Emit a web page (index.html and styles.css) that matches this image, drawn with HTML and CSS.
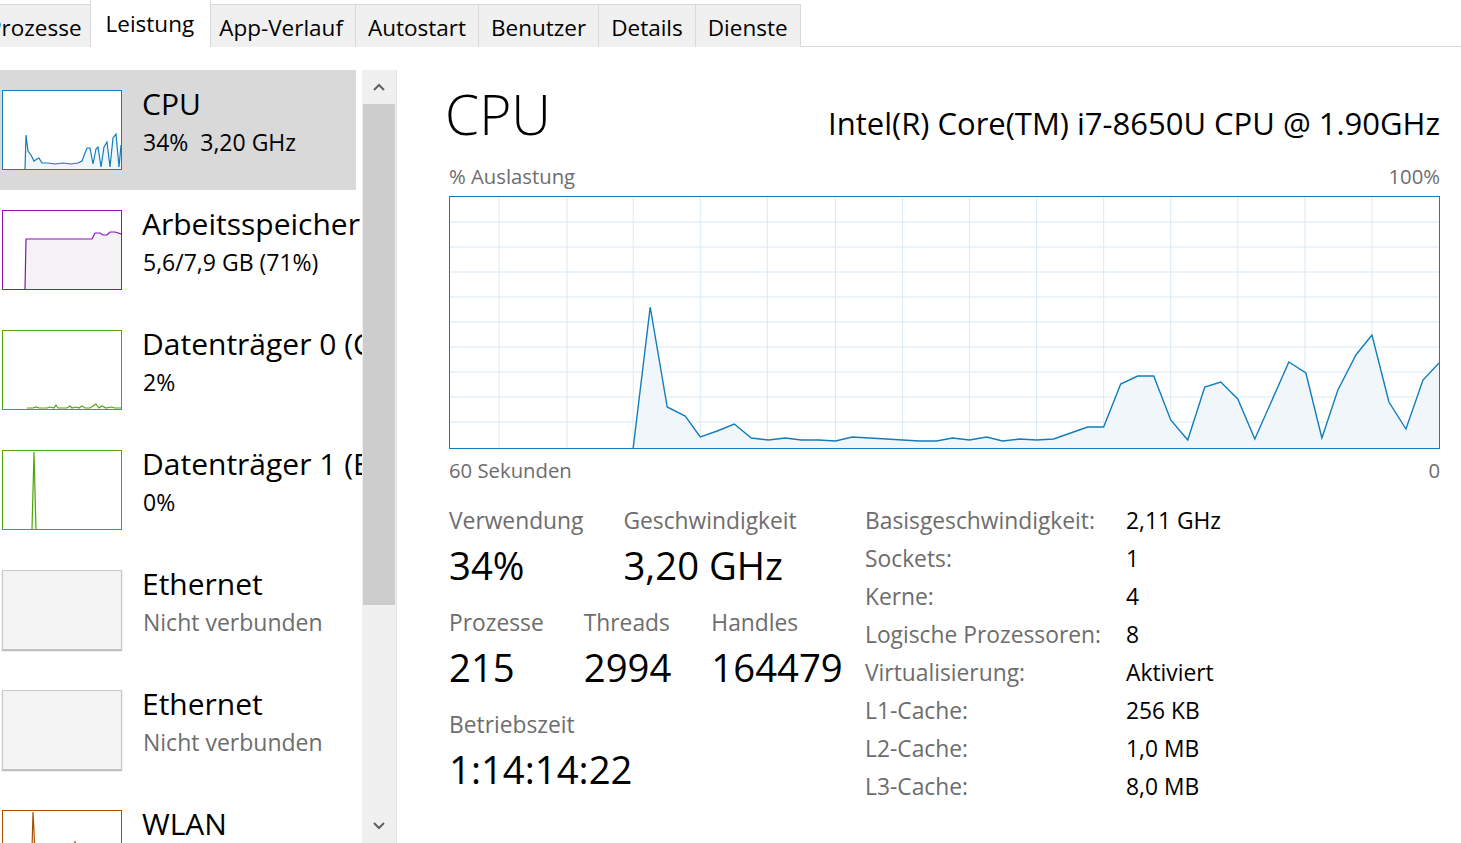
FILE: index.html
```html
<!DOCTYPE html>
<html lang="de">
<head>
<meta charset="utf-8">
<title>Task-Manager – Leistung</title>
<link rel="stylesheet" href="styles.css">
</head>
<body>
<div class="tabs">
  <div class="tab first">Prozesse</div>
  <div class="tab active">Leistung</div>
  <div class="tab">App-Verlauf</div>
  <div class="tab">Autostart</div>
  <div class="tab">Benutzer</div>
  <div class="tab">Details</div>
  <div class="tab">Dienste</div>
</div>
<div class="main">
  <aside class="side">
    <div class="list">
      <div class="item selected">
        <div class="thumb t-cpu">
          <svg viewBox="0 0 118 78" preserveAspectRatio="none"><polygon class="f-cpu" points="22,78 23,44 25,60 28,64 31,70 34,68 36,67 39,72 45,72 52,73 60,72 68,73 75,72 79,70 82,62 84,57 87,57 90,73 93,58 95,56 98,76 101,56 104,51 107,76 110,47 113,43 116,76 118,54 118,78"/><polyline class="l-cpu" points="22,78 23,44 25,60 28,64 31,70 34,68 36,67 39,72 45,72 52,73 60,72 68,73 75,72 79,70 82,62 84,57 87,57 90,73 93,58 95,56 98,76 101,56 104,51 107,76 110,47 113,43 116,76 118,54"/></svg>
        </div>
        <div class="info"><div class="name">CPU</div><div class="sub">34%&nbsp; 3,20 GHz</div></div>
      </div>
      <div class="item">
        <div class="thumb t-mem">
          <svg viewBox="0 0 118 78" preserveAspectRatio="none"><polygon class="f-mem" points="22,78 23,28 89,28 92,22 97,22 100,24 104,24 107,21 112,21 118,23 118,78"/><polyline class="l-mem" points="22,78 23,28 89,28 92,22 97,22 100,24 104,24 107,21 112,21 118,23"/></svg>
        </div>
        <div class="info"><div class="name">Arbeitsspeicher</div><div class="sub">5,6/7,9 GB (71%)</div></div>
      </div>
      <div class="item">
        <div class="thumb t-disk">
          <svg viewBox="0 0 118 78" preserveAspectRatio="none"><polyline class="l-disk" points="24,77 30,77 33,76 36,77 44,77 47,76 51,77 53,74 55,77 64,77 67,75 69,77 73,76 76,77 79,75 82,77 87,77 90,75 93,73 96,77 99,75 103,77 108,76 112,77 118,77"/></svg>
        </div>
        <div class="info"><div class="name">Datenträger 0 (C:)</div><div class="sub">2%</div></div>
      </div>
      <div class="item">
        <div class="thumb t-disk">
          <svg viewBox="0 0 118 78" preserveAspectRatio="none"><polygon class="f-disk" points="29,78 31,1 33,78"/><polyline class="l-disk" points="29,78 31,1 33,78"/></svg>
        </div>
        <div class="info"><div class="name">Datenträger 1 (E:)</div><div class="sub">0%</div></div>
      </div>
      <div class="item">
        <div class="thumb t-eth"></div>
        <div class="info"><div class="name">Ethernet</div><div class="sub grey">Nicht verbunden</div></div>
      </div>
      <div class="item">
        <div class="thumb t-eth"></div>
        <div class="info"><div class="name">Ethernet</div><div class="sub grey">Nicht verbunden</div></div>
      </div>
      <div class="item">
        <div class="thumb t-wlan">
          <svg viewBox="0 0 118 78" preserveAspectRatio="none"><polyline class="l-wlan" points="28,78 30,1 31,20 33,78 70,78 72,30 73,40 75,78 118,78"/></svg>
        </div>
        <div class="info"><div class="name">WLAN</div><div class="sub">S: 0 E: 0 KBit/s</div></div>
      </div>
    </div>
    <div class="scrollbar">
      <div class="sb-btn"><svg viewBox="0 0 12 8"><polyline points="1,7 6,2 11,7"/></svg></div>
      <div class="sb-thumb"></div>
      <div class="sb-track"></div>
      <div class="sb-btn"><svg viewBox="0 0 12 8"><polyline points="1,1 6,6 11,1"/></svg></div>
    </div>
  </aside>

  <section class="detail">
    <div class="head">
      <div class="big-title">CPU</div>
      <div class="proc">Intel(R) Core(TM) i7-8650U CPU @ 1.90GHz</div>
    </div>
    <div class="axis top"><span>% Auslastung</span><span>100%</span></div>
    <div class="graph">
      <svg viewBox="0 0 988 251" preserveAspectRatio="none">
        <g class="grid">
          <line x1="0" y1="25" x2="988" y2="25"/><line x1="0" y1="50" x2="988" y2="50"/>
          <line x1="0" y1="75" x2="988" y2="75"/><line x1="0" y1="100" x2="988" y2="100"/>
          <line x1="0" y1="125" x2="988" y2="125"/><line x1="0" y1="150" x2="988" y2="150"/>
          <line x1="0" y1="175" x2="988" y2="175"/><line x1="0" y1="200" x2="988" y2="200"/>
          <line x1="0" y1="225" x2="988" y2="225"/>
          <line x1="49" y1="0" x2="49" y2="251"/><line x1="117" y1="0" x2="117" y2="251"/>
          <line x1="183" y1="0" x2="183" y2="251"/><line x1="250" y1="0" x2="250" y2="251"/>
          <line x1="317" y1="0" x2="317" y2="251"/><line x1="385" y1="0" x2="385" y2="251"/>
          <line x1="452" y1="0" x2="452" y2="251"/><line x1="519" y1="0" x2="519" y2="251"/>
          <line x1="586" y1="0" x2="586" y2="251"/><line x1="653" y1="0" x2="653" y2="251"/>
          <line x1="720" y1="0" x2="720" y2="251"/><line x1="787" y1="0" x2="787" y2="251"/>
          <line x1="854" y1="0" x2="854" y2="251"/><line x1="921" y1="0" x2="921" y2="251"/>
        </g>
        <polygon class="area" points="183,251 200,110 217,210 235,219 250,240 267,234 284,227 301,241 318,243 335,241 351,243 368,243 385,244 402,240 419,241 436,242 452,243 469,244 486,244 502,241 519,243 536,240 552,244 569,242 586,243 603,242 620,236 637,230 653,230 670,187 687,179 703,179 720,223 737,243 754,190 770,185 787,202 804,242 838,165 855,176 871,241 887,193 905,158 921,138 938,205 955,232 972,183 988,166 988,251"/>
        <polyline class="line" points="183,251 200,110 217,210 235,219 250,240 267,234 284,227 301,241 318,243 335,241 351,243 368,243 385,244 402,240 419,241 436,242 452,243 469,244 486,244 502,241 519,243 536,240 552,244 569,242 586,243 603,242 620,236 637,230 653,230 670,187 687,179 703,179 720,223 737,243 754,190 770,185 787,202 804,242 838,165 855,176 871,241 887,193 905,158 921,138 938,205 955,232 972,183 988,166"/>
      </svg>
    </div>
    <div class="axis bottom"><span>60 Sekunden</span><span>0</span></div>

    <div class="stats">
      <div class="stats-left">
        <div class="row">
          <div class="stat"><div class="lbl">Verwendung</div><div class="val">34%</div></div>
          <div class="stat"><div class="lbl">Geschwindigkeit</div><div class="val">3,20 GHz</div></div>
        </div>
        <div class="row">
          <div class="stat"><div class="lbl">Prozesse</div><div class="val">215</div></div>
          <div class="stat"><div class="lbl">Threads</div><div class="val">2994</div></div>
          <div class="stat"><div class="lbl">Handles</div><div class="val">164479</div></div>
        </div>
        <div class="row">
          <div class="stat"><div class="lbl">Betriebszeit</div><div class="val">1:14:14:22</div></div>
        </div>
      </div>
      <div class="props">
        <div class="k">Basisgeschwindigkeit:</div><div class="v">2,11 GHz</div>
        <div class="k">Sockets:</div><div class="v">1</div>
        <div class="k">Kerne:</div><div class="v">4</div>
        <div class="k">Logische Prozessoren:</div><div class="v">8</div>
        <div class="k">Virtualisierung:</div><div class="v">Aktiviert</div>
        <div class="k">L1-Cache:</div><div class="v">256 KB</div>
        <div class="k">L2-Cache:</div><div class="v">1,0 MB</div>
        <div class="k">L3-Cache:</div><div class="v">8,0 MB</div>
      </div>
    </div>
  </section>
</div>
</body>
</html>
```

FILE: styles.css
```css
* { box-sizing: border-box; }
html, body { margin: 0; padding: 0; }
body {
  width: 1461px;
  height: 843px;
  overflow: hidden;
  background: #fff;
  color: #000;
  font-family: "Open Sans", "Noto Sans", "Liberation Sans", sans-serif;
}

/* ---------- Tabs ---------- */
.tabs {
  display: flex;
  height: 47px;
  align-items: flex-end;
  border-bottom: 1px solid #d9d9d9;
  margin-left: -24px;
  white-space: nowrap;
}
.tab {
  height: 43px;
  margin-bottom: -1px;
  margin-left: -1px;
  padding: 0 12px;
  font-size: 22.5px;
  line-height: 46px;
  background: #f0f0f0;
  border: 1px solid #d9d9d9;
  border-bottom: none;
  color: #000;
  overflow: hidden;
}
.tab.first { padding-right: 10px; }
.tab.active {
  position: relative;
  z-index: 1;
  height: 48px;
  background: #fff;
  line-height: 48px;
  padding: 0 16px 0 15px;
  margin-left: -3px;
  margin-right: -4px;
}

/* ---------- Sidebar ---------- */
.main {
  display: flex;
  height: 796px;
}
.side {
  display: flex;
  margin-top: 23px;
  width: 397px;
  border-right: 1px solid #e3e3e3;
}
.list {
  width: 362px;
  overflow: hidden;
}
.item {
  display: flex;
  width: 356px;
  height: 120px;
  white-space: nowrap;
}
.item.selected { background: #d9d9d9; }
.thumb {
  flex: none;
  width: 120px;
  height: 80px;
  margin: 20px 0 0 2px;
  border: 1px solid;
  background: #fff;
}
.thumb svg { display: block; width: 100%; height: 100%; }
.t-cpu { border-color: #117dbb; }
.t-mem { border-color: #8b12ae; }
.t-disk { border-color: #4da60c; }
.t-wlan { border-color: #a74f01; }
.t-eth {
  border-color: #c6c6c6;
  background: #f4f3f4;
  box-shadow: 0 1px 1px #b9b9b9;
}
.l-cpu, .l-mem, .l-disk, .l-wlan { fill: none; stroke-width: 1.2; }
.l-cpu { stroke: #117dbb; }
.f-cpu { fill: #f1f6fa; }
.l-mem { stroke: #8b12ae; }
.f-mem { fill: #f4f2f4; }
.l-disk { stroke: #4da60c; }
.f-disk { fill: #eff7e9; }
.l-wlan { stroke: #a74f01; }

.info {
  margin-left: 20px;
  padding-top: 15px;
}
.name {
  font-size: 30px;
  line-height: 38px;
}
.sub {
  margin-top: 4px;
  margin-left: 1px;
  font-size: 23px;
  line-height: 30px;
}
.sub.grey { color: #6d6d6d; }

.scrollbar {
  width: 34px;
  display: flex;
  flex-direction: column;
  background: #f0f0f0;
}
.sb-btn {
  height: 34px;
  display: flex;
  align-items: center;
  justify-content: center;
}
.sb-btn svg { width: 12px; height: 8px; }
.sb-btn polyline { fill: none; stroke: #606060; stroke-width: 2; }
.sb-thumb {
  height: 501px;
  margin: 0 1px;
  background: #cdcdcd;
}
.sb-track { flex: 1; }

/* ---------- Detail ---------- */
.detail {
  flex: 1;
  padding: 31px 21px 0 52px;
  white-space: nowrap;
}
.head {
  display: flex;
  justify-content: space-between;
  align-items: baseline;
}
.big-title {
  font-size: 55px;
  font-weight: 300;
  line-height: 72px;
  margin-left: -4px;
}
.proc {
  font-size: 31px;
  line-height: 40px;
}
.axis {
  display: flex;
  justify-content: space-between;
  font-size: 20.3px;
  line-height: 28px;
  color: #6d6d6d;
}
.axis.top { margin-top: 12px; }
.axis.bottom { margin-top: 7px; }
.graph {
  margin-top: 6px;
  height: 253px;
  border: 1px solid #117dbb;
}
.graph svg { display: block; width: 100%; height: 100%; }
.grid line { stroke: #d9eaf7; stroke-width: 1; }
.area { fill: #f1f6fa; }
.line { fill: none; stroke: #117dbb; stroke-width: 1.4; }

.stats {
  display: flex;
  align-items: flex-start;
  margin-top: 18px;
}
.stats-left {
  width: 416px;
  padding-top: 4px;
}
.row {
  display: flex;
  gap: 40px;
  margin-bottom: 14px;
}
.lbl {
  font-size: 22.8px;
  line-height: 30px;
  color: #6d6d6d;
}
.val {
  font-size: 38.3px;
  line-height: 58px;
}
.props {
  display: grid;
  grid-template-columns: 261px auto;
  align-content: start;
  font-size: 22.8px;
  line-height: 38px;
}
.props .k { color: #6d6d6d; }
```
